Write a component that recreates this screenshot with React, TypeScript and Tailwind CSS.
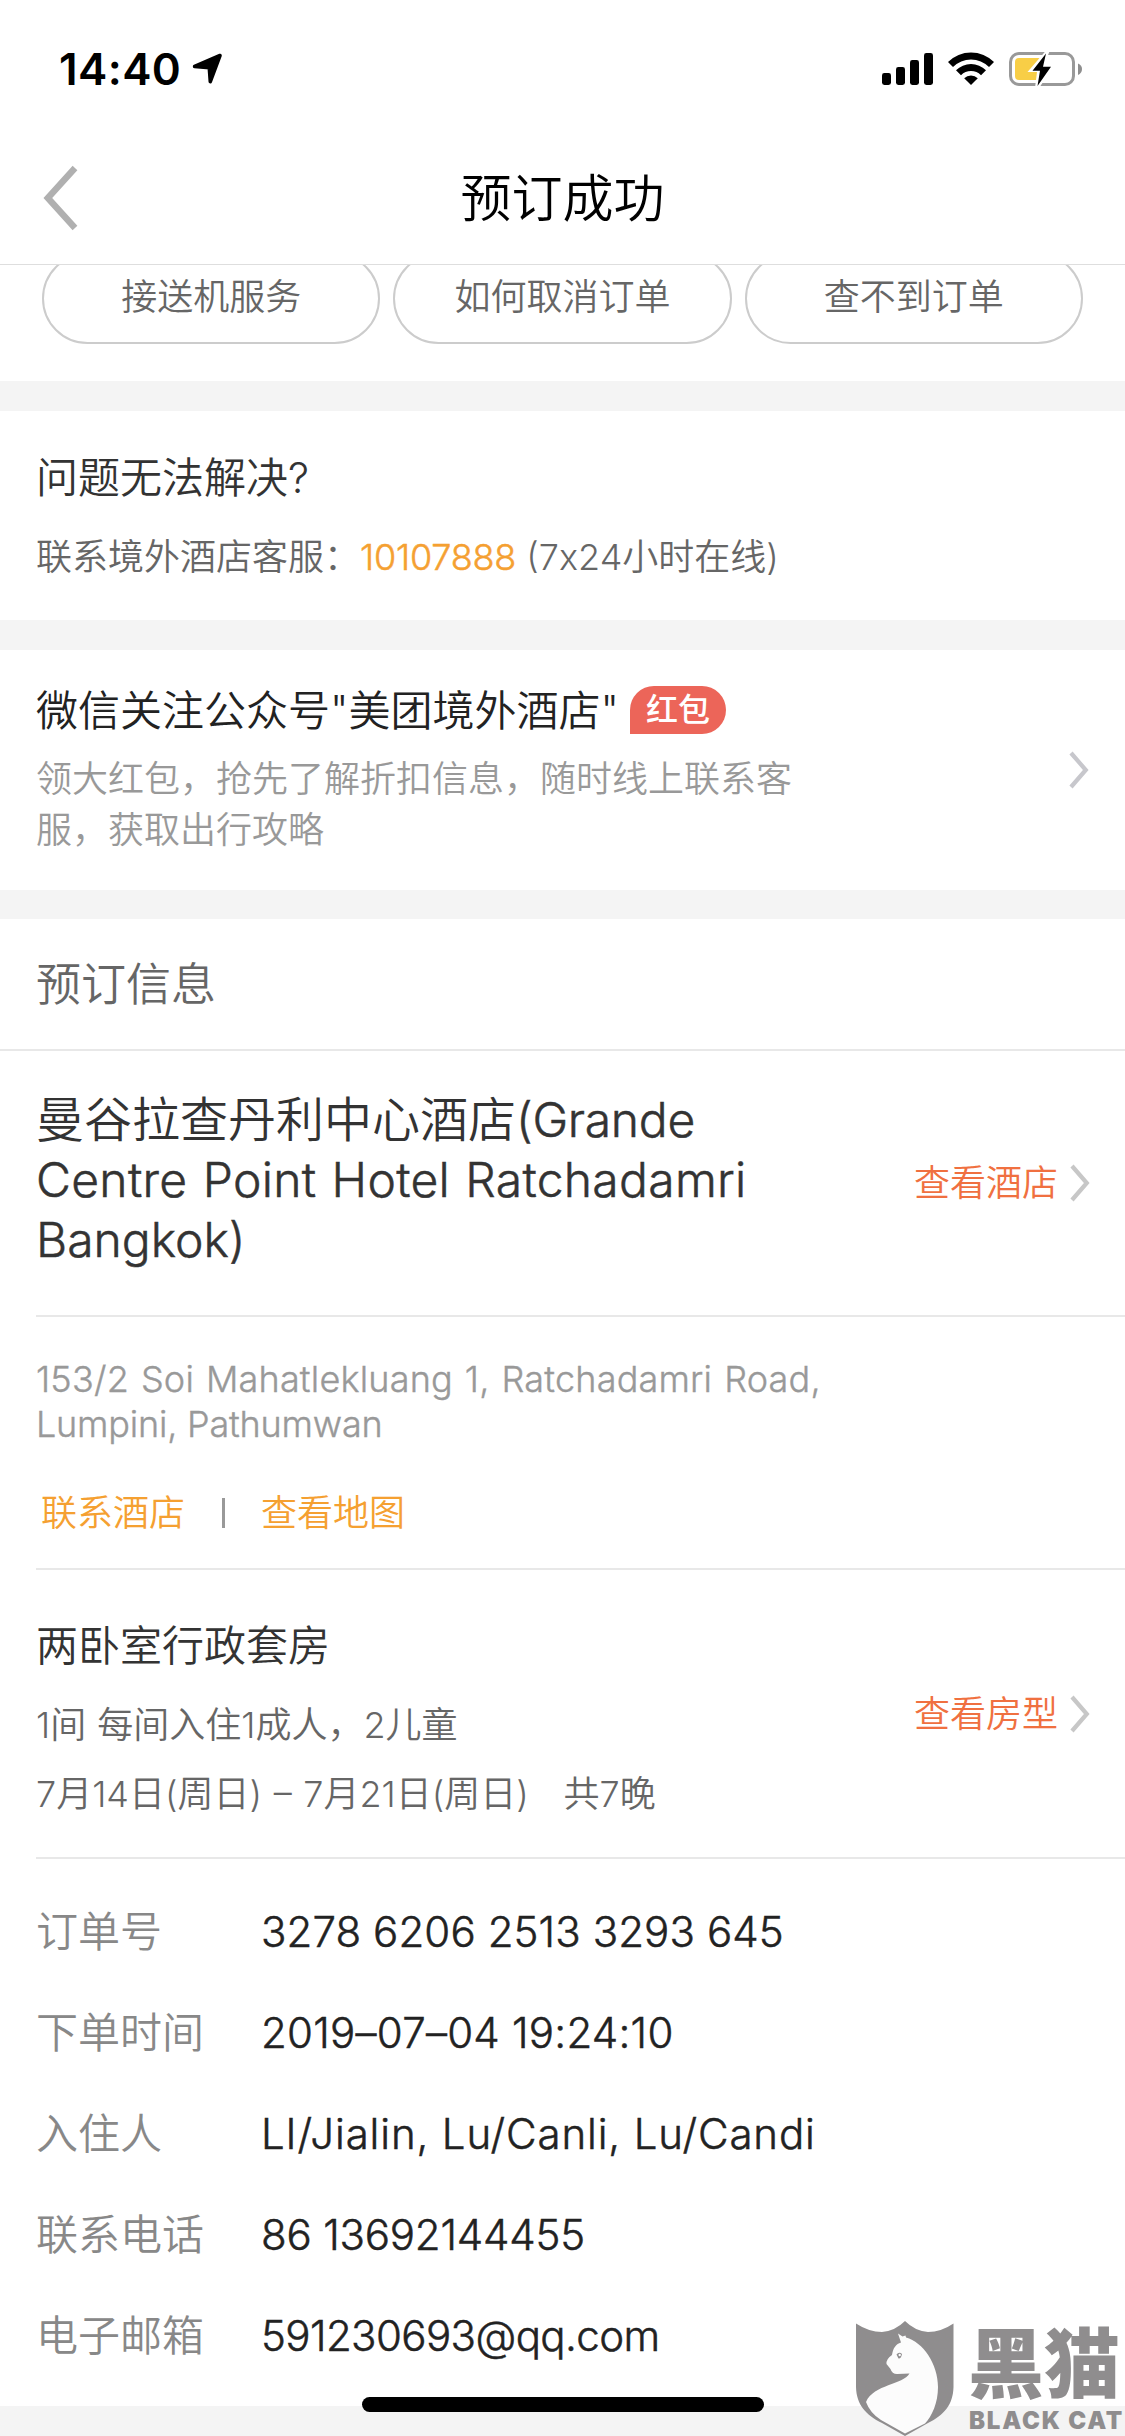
import React from 'react'

interface ChevronProps {
  className?: string
}

const ChevronRight: React.FC<ChevronProps> = ({ className = '' }) => (
  <svg
    className={`shrink-0 ${className}`}
    width="20"
    height="38"
    viewBox="0 0 20 38"
    fill="none"
    stroke="currentColor"
    strokeWidth="4.2"
  >
    <path d="M2 2 L16.8 19 L2 36" />
  </svg>
)

const StatusBar: React.FC = () => (
  <div className="flex h-[132px] justify-between pt-[52px] pr-[43px] pl-[59px]">
    <div className="flex h-[34px] items-center">
      <span className="w-[133px] text-[44px] font-semibold tracking-[0.4px] text-black">14:40</span>
      <svg width="31" height="32" viewBox="0 0 31 32">
        <path
          d="M28 2.5 L18.3 28.6 L17.3 14.8 L2.6 13.4 Z"
          fill="black"
          stroke="black"
          strokeWidth="3.6"
          strokeLinejoin="round"
        />
      </svg>
    </div>
    <div className="flex h-[34px] items-start">
      {/* Signal */}
      <svg className="mt-px" width="51" height="32" viewBox="0 0 51 32">
        <rect x="0" y="20" width="9" height="12" rx="2.4" />
        <rect x="14" y="14" width="9" height="18" rx="2.4" />
        <rect x="28" y="7" width="9" height="25" rx="2.4" />
        <rect x="42" y="0" width="9" height="32" rx="2.4" />
      </svg>
      {/* Wi-Fi */}
      <svg className="ml-[15px]" width="46" height="34" viewBox="0 0 46 34">
        <path d="M0 10 A32.5 32.5 0 0 1 46 10 L41 15 A25.5 25.5 0 0 0 5 15 Z" />
        <path d="M8 18.2 A21.3 21.3 0 0 1 38 18.2 L33 23.2 A14.3 14.3 0 0 0 13 23.2 Z" />
        <path d="M16.2 26.2 A9.8 9.8 0 0 1 29.8 26.2 L23 33 Z" />
      </svg>
      {/* Battery, charging */}
      <svg className="ml-[15px]" width="73" height="34" viewBox="0 0 73 34">
        <rect x="1.5" y="1.5" width="63" height="31" rx="8.5" fill="white" stroke="#999999" strokeWidth="3" />
        <path d="M69 11.5 Q73 13 73 17 Q73 21 69 23 Z" fill="#8e8e8e" />
        <rect x="6" y="6" width="27" height="22" rx="4" fill="#f8ce46" />
        <path d="M37.5 -2 L18.5 20 L28 20 L26 36 L30 36 L45.5 13.5 L35 13.5 L41 -2 Z" fill="white" />
        <path d="M37 1.5 L23.5 18.8 L31 18.8 L28.5 34 L42 14.8 L34 14.8 Z" fill="black" />
      </svg>
    </div>
  </div>
)

const NavBar: React.FC = () => (
  <div className="flex h-[133px] items-center border-b border-[#dedede] pl-[43px]">
    <svg width="36" height="66" viewBox="0 0 36 66" fill="none" stroke="#b0b0b0" strokeWidth="6.4">
      <path d="M32 3 L4.8 33 L32 63" />
    </svg>
    <h1 className="flex-1 pt-[2px] pr-[79px] text-center text-[51px] leading-[60px] text-black">预订成功</h1>
  </div>
)

const shortcuts = ['接送机服务', '如何取消订单', '查不到订单']

const Shortcuts: React.FC = () => (
  <div className="h-[116px] overflow-hidden">
    <div className="-mt-[12px] flex gap-[13px] px-[42px]">
      {shortcuts.map((label) => (
        <button
          key={label}
          className="h-[91px] flex-1 rounded-full border-2 border-[#cccccc] pb-[3px] text-[36px] text-[#666666]"
        >
          {label}
        </button>
      ))}
    </div>
  </div>
)

interface SideLinkProps {
  label: string
}

const SideLink: React.FC<SideLinkProps> = ({ label }) => (
  <a className="flex items-center gap-[12px] pr-[35px] text-[36px] text-[#f07040]">
    {label}
    <ChevronRight className="text-[#c7c7c7]" />
  </a>
)

const orderRows = [
  { label: '订单号', value: '3278 6206 2513 3293 645', spacing: 'tracking-[0.1px]' },
  { label: '下单时间', value: '2019–07–04 19:24:10', spacing: 'tracking-[0.25px]' },
  { label: '入住人', value: 'LI/Jialin, Lu/Canli, Lu/Candi', spacing: 'tracking-[0.86px]' },
  { label: '联系电话', value: '86 13692144455', spacing: 'tracking-[-0.2px]' },
  { label: '电子邮箱', value: '591230693@qq.com', spacing: 'tracking-[-0.6px]' },
]

const Watermark: React.FC = () => (
  <div className="absolute top-[2321px] left-[856px] flex text-[#8f8d8e]">
    <svg width="98" height="115" viewBox="0 0 98 115">
      <path
        d="M0 2.5 Q13 11 26 11 Q39 10 49 0 Q59 10 72 11 Q85 11 97.5 2.5 L97.5 66 C97 84 88 94 72 102 L49 115 L26 102 C10 94 0.5 84 0 66 Z"
        fill="currentColor"
      />
      <path
        d="M42 12.5 L46.5 15.5 L49.5 14.5 L50 16.5 C67 21 82 43 82 66 C82 82 76 95 69 102.5 L49 112.5 L25 99 Q14 92 10 81 C18 63 47 64 53.5 52.5 L41 53 Q36 53 34.5 48 L30.5 43 Q30 38 36 34 C37 27 40 23 45 21.5 Z"
        fill="#fcfcfc"
      />
      <path d="M40.5 33.5 Q43 30.5 46 33 Q45 38 42.5 37.5 Z" fill="currentColor" />
      <circle cx="43.7" cy="34" r="1.2" fill="white" />
    </svg>
    <div className="ml-[14px] whitespace-nowrap">
      <div className="mt-[5px] h-[76px] text-[76px] leading-[76px] font-black">黑猫</div>
      <div className="mt-[5px] ml-px text-[24px] leading-[28px] font-black tracking-[1.8px]">BLACK CAT</div>
    </div>
  </div>
)

export default function App() {
  return (
    <div className="relative h-[2436px] w-[1125px] overflow-hidden bg-[#f4f4f4] font-['Inter','Noto_Sans_CJK_SC',sans-serif] font-[350] text-[#333333]">
      <header className="bg-white">
        <StatusBar />
        <NavBar />
      </header>

      <div className="flex flex-col">
        <section className="bg-white">
          <Shortcuts />
        </section>

        {/* Customer service */}
        <section className="mt-[30px] h-[209px] bg-white px-[36px] pt-[37px]">
          <h2 className="text-[42px] leading-[60px]">问题无法解决?</h2>
          <p className="mt-[24px] text-[36px] leading-[50px] text-[#666666]">
            联系境外酒店客服：
            <span className="tracking-[-0.2px] text-[#f5a031] [-webkit-text-stroke:0.5px]">10107888</span>{' '}
            (7x24小时在线)
          </p>
        </section>

        {/* WeChat promotion */}
        <section className="mt-[30px] flex h-[240px] items-center justify-between bg-white pr-[36px] pl-[36px]">
          <div className="h-[240px] pt-[31px]">
            <div className="flex h-[60px] items-center">
              <h2 className="w-[584px] text-[42px] leading-[60px] whitespace-nowrap text-[#222222]">
                微信关注公众号"美团境外酒店"
              </h2>
              <span className="mb-[2px] ml-[10px] flex h-[48px] w-[96px] items-center justify-center rounded-[24px] rounded-bl-none bg-[#ec6559] text-[32px] font-medium text-white">
                红包
              </span>
            </div>
            <p className="mt-[13px] w-[760px] text-[36px] leading-[51px] text-[#999999]">
              领大红包，抢先了解折扣信息，随时线上联系客服，获取出行攻略
            </p>
          </div>
          <ChevronRight className="text-[#c7c7cc]" />
        </section>

        {/* Booking information */}
        <section className="mt-[29px] bg-white">
          <h2 className="h-[132px] border-b-2 border-[#e8e8e8] pl-[36px] text-[45px] leading-[132px] text-[#666666]">
            预订信息
          </h2>
          <div className="pl-[36px]">
            <div className="flex h-[266px] items-center justify-between border-b-2 border-[#e8e8e8]">
              <h3 className="pb-[6px] text-[48px] leading-[60px] whitespace-nowrap">
                曼谷拉查丹利中心酒店
                <span className="tracking-[-0.3px] [-webkit-text-stroke:0.5px]">(Grande</span>
                <br />
                <span className="tracking-[0.3px] [-webkit-text-stroke:0.5px] [word-spacing:1.5px]">
                  Centre Point Hotel Ratchadamri
                </span>
                <br />
                <span className="[-webkit-text-stroke:0.5px]">Bangkok)</span>
              </h3>
              <SideLink label="查看酒店" />
            </div>

            <div className="h-[253px] border-b-2 border-[#e8e8e8] pt-[40px]">
              <p className="text-[36px] leading-[45px] text-[#999999] [-webkit-text-stroke:0.4px]">
                <span className="tracking-[0.2px] [word-spacing:1.6px]">
                  153/2 Soi Mahatlekluang 1, Ratchadamri Road,
                </span>
                <br />
                <span className="tracking-[-0.2px]">Lumpini, Pathumwan</span>
              </p>
              <div className="mt-[41px] flex h-[50px] items-center pl-[5px] text-[36px] text-[#f5a031]">
                <a>联系酒店</a>
                <span className="mr-[36px] ml-[37px] h-[30px] w-[3px] bg-[#999999]" />
                <a>查看地图</a>
              </div>
            </div>

            <div className="flex h-[289px] items-center justify-between border-b-2 border-[#e8e8e8]">
              <div className="pt-[17px]">
                <h3 className="text-[42px] leading-[60px]">两卧室行政套房</h3>
                <p className="mt-[15px] text-[36px] leading-[69px] text-[#666666] [word-spacing:1px]">
                  1间 每间入住1成人，2儿童
                </p>
                <p className="text-[36px] leading-[69px] whitespace-pre text-[#666666] [word-spacing:1.5px]">
                  7月14日(周日) – 7月21日(周日)   共7晚
                </p>
              </div>
              <SideLink label="查看房型" />
            </div>

            <dl className="h-[547px] pt-[22px]">
              {orderRows.map(({ label, value, spacing }) => (
                <div key={label} className="flex h-[101px] items-center text-[42px]">
                  <dt className="w-[225px] text-[#888888]">{label}</dt>
                  <dd className={`text-[#222222] [-webkit-text-stroke:0.5px] ${spacing}`}>{value}</dd>
                </div>
              ))}
            </dl>
          </div>
        </section>
      </div>

      {/* Home indicator */}
      <div className="absolute top-[2397px] left-[362px] h-[15px] w-[402px] rounded-full bg-black" />
      <Watermark />
    </div>
  )
}
